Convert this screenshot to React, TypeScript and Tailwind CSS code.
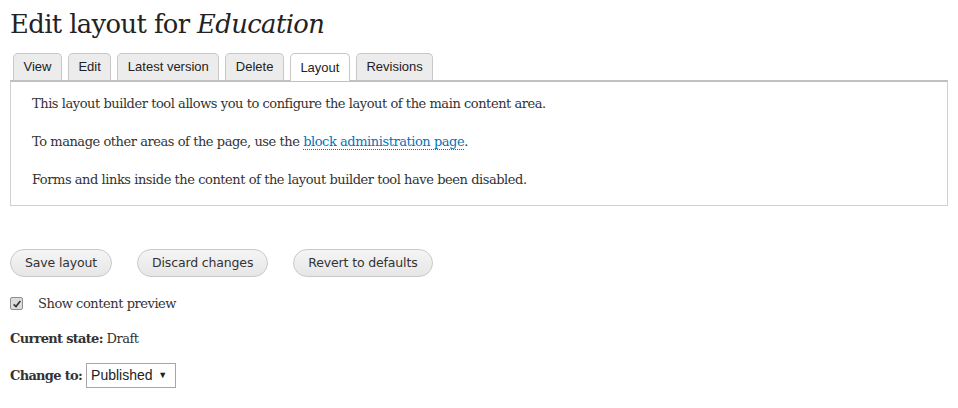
import * as React from 'react';

const tabs = ['View', 'Edit', 'Latest version', 'Delete', 'Layout', 'Revisions'];

const serif = "font-['DejaVu_Serif',Georgia,serif]";

export default function App() {
  return (
    <div className={`${serif} w-[958px] h-[408px] bg-white text-[#333] px-[10px] overflow-hidden`}>
      <h1 className="text-[25.8px] leading-[34px] pt-[7px] text-[#222] tracking-[-0.6px]">
        Edit layout for <em>Education</em>
      </h1>

      {/* tabs */}
      <div className="mt-[12px] flex gap-[6px] pl-[3px] font-['Liberation_Sans',Arial,sans-serif] text-[13px]">
        {tabs.map((t) => (
          <div
            key={t}
            className={
              t === 'Layout'
                ? 'h-[28px] -mb-[1px] px-[9.5px] flex items-center rounded-t-[5px] border border-b-0 border-[#c8c8c8] bg-white text-[#222] relative z-10'
                : 'h-[27px] px-[9.5px] flex items-center rounded-t-[5px] border border-b-0 border-[#c8c8c8] bg-[#ececec] text-[#222]'
            }
          >
            {t}
          </div>
        ))}
      </div>

      <div className="border border-[#d0d0d0] border-t-[2px] border-t-[#c0c0c0] pl-[21px] pt-[12px] pb-[15px] text-[13px] leading-[20px] tracking-[-0.45px]">
        <p>This layout builder tool allows you to configure the layout of the main content area.</p>
        <p className="mt-[18px]">
          To manage other areas of the page, use the{' '}
          <a className="text-[#0074bd] border-b border-dotted border-[#0074bd]">block administration page</a>.
        </p>
        <p className="mt-[18px]">Forms and links inside the content of the layout builder tool have been disabled.</p>
      </div>

      {/* actions */}
      <div className="mt-[43px] flex gap-[25px] font-['DejaVu_Sans',Verdana,sans-serif] text-[12.5px] text-[#333]">
        {['Save layout', 'Discard changes', 'Revert to defaults'].map((b) => (
          <button
            key={b}
            className="h-[28px] px-[14px] rounded-full border border-[#c9c9c9] bg-gradient-to-b from-[#f5f5f5] to-[#e6e6e6] tracking-[-0.15px]"
          >
            {b}
          </button>
        ))}
      </div>

      <div className="mt-[17px] flex items-center text-[13px] tracking-[-0.45px]">
        <span className="w-[13px] h-[13px] rounded-[2px] border border-[#8f8f8f] bg-[#dcdcdc] flex items-center justify-center">
          <svg viewBox="0 0 12 12" className="w-[10px] h-[10px]">
            <path d="M2 6.5 L4.8 9 L10 2.5" fill="none" stroke="#333" strokeWidth="2" />
          </svg>
        </span>
        <span className="ml-[15px]">Show content preview</span>
      </div>

      <div className="mt-[15px] text-[13px] tracking-[-0.45px]">
        <b className="tracking-[-0.7px]">Current state:</b> Draft
      </div>

      <div className="mt-[15px] flex items-center text-[13px]">
        <b className="tracking-[-0.7px]">Change to:</b>
        <span className="ml-[4px] h-[25px] w-[90px] border border-[#a6a6a6] flex items-center justify-between pl-[4px] pr-[8px] font-['Liberation_Sans',Arial,sans-serif] text-[14px] text-[#222]">
          Published
          <span className="text-[9px]">▼</span>
        </span>
      </div>
    </div>
  );
}
